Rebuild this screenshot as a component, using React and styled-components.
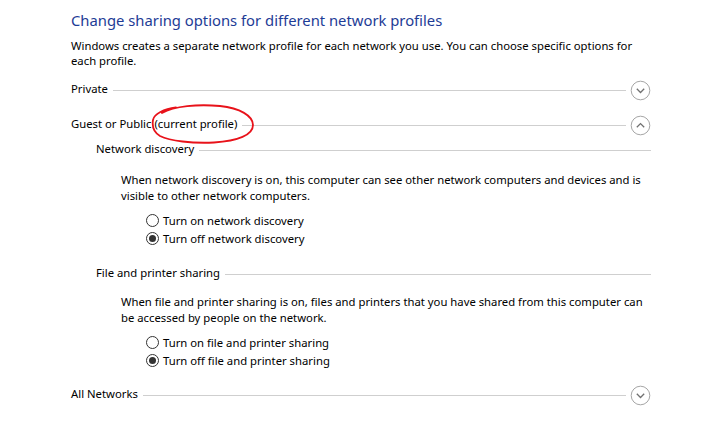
import React from "react";
import styled, { createGlobalStyle } from "styled-components";

const GlobalStyle = createGlobalStyle`
  html, body {
    margin: 0;
    background: #fff;
  }
  body {
    font-family: "Noto Sans", "Segoe UI", sans-serif;
    font-size: 11.3px;
    color: #000;
  }
`;

const Page = styled.div`
  width: 580px;
  padding: 9px 0 30px 71px;
`;

const Title = styled.h1`
  margin: 0;
  font-size: 14.8px;
  font-weight: 400;
  line-height: 22px;
  color: #1e3c96;
`;

const Intro = styled.p`
  margin: 7px 0 0;
  line-height: 15px;
  white-space: nowrap;
`;

const Header = styled.div`
  display: flex;
  align-items: center;
  height: 20px;
  margin-top: ${({ $top }) => $top}px;
  margin-left: ${({ $indent }) => $indent || 0}px;
  width: ${({ $indent }) => 580 - ($indent || 0)}px;
`;

const Label = styled.span`
  position: relative;
  white-space: nowrap;
  line-height: 20px;
`;

const Rule = styled.span`
  flex: 1;
  height: 1px;
  margin: 2px 0 0 5px;
  background: #cfcfcf;
`;

const Toggle = styled.svg`
  flex: none;
  width: 21px;
  height: 21px;
  margin: 3px 0 0 4px;
  overflow: visible;
`;

const Scribble = styled.svg`
  position: absolute;
  left: -4px;
  top: -12px;
  width: 106px;
  height: 40px;
  pointer-events: none;
`;

const Body = styled.div`
  margin-left: 50px;
  margin-top: ${({ $top }) => $top}px;
`;

const Note = styled.p`
  margin: 0;
  line-height: 16px;
  white-space: nowrap;
`;

const Options = styled.div`
  display: flex;
  flex-direction: column;
  margin: 7px 0 0 25px;
`;

const Option = styled.label`
  display: flex;
  align-items: center;
  height: 18px;
  gap: 4px;
  white-space: nowrap;
`;

const Dot = styled.span`
  flex: none;
  box-sizing: border-box;
  width: 13px;
  height: 13px;
  border: 1px solid #333;
  border-radius: 50%;
  display: flex;
  align-items: center;
  justify-content: center;

  &::after {
    content: "";
    width: 7px;
    height: 7px;
    border-radius: 50%;
    background: ${({ $on }) => ($on ? "#333" : "transparent")};
  }
`;

function Chevron({ up }) {
  return (
    <Toggle viewBox="0 0 21 21">
      <circle cx="10.5" cy="10.5" r="9.3" fill="none" stroke="#a6a6a6" strokeWidth="1" />
      <path
        d={up ? "M6.8 12.3 L10.5 8.6 L14.2 12.3" : "M6.8 8.8 L10.5 12.5 L14.2 8.8"}
        fill="none"
        stroke="#707070"
        strokeWidth="1.3"
      />
    </Toggle>
  );
}

function Radio({ on, children }) {
  return (
    <Option>
      <Dot $on={on} />
      {children}
    </Option>
  );
}

export default function App() {
  return (
    <>
      <GlobalStyle />
      <Page>
        <Title>Change sharing options for different network profiles</Title>
        <Intro>
          Windows creates a separate network profile for each network you use. You can choose specific options for
          <br />
          each profile.
        </Intro>

        <Header $top={11}>
          <Label>Private</Label>
          <Rule />
          <Chevron />
        </Header>

        <Header $top={15}>
          <Label>
            Guest or Public{" "}
            <Label>
              (current profile)
              <Scribble viewBox="0 0 106 40">
                <path
                  d="M12 9 C 24 2, 48 0, 70 2 C 90 4, 103 12, 103 21 C 103 31, 88 37, 64 38.5 C 42 39.5, 20 37, 10 32 C 3 28, 2 22, 3 16 C 4 10, 14 5, 26 3.5"
                  fill="none"
                  stroke="#e8121a"
                  strokeWidth="1.8"
                  strokeLinecap="round"
                />
              </Scribble>
            </Label>
          </Label>
          <Rule />
          <Chevron up />
        </Header>

        <Header $top={5} $indent={25}>
          <Label>Network discovery</Label>
          <Rule />
        </Header>
        <Body $top={13}>
          <Note>
            When network discovery is on, this computer can see other network computers and devices and is
            <br />
            visible to other network computers.
          </Note>
          <Options>
            <Radio>Turn on network discovery</Radio>
            <Radio on>Turn off network discovery</Radio>
          </Options>
        </Body>

        <Header $top={16} $indent={25}>
          <Label>File and printer sharing</Label>
          <Rule />
        </Header>
        <Body $top={11}>
          <Note>
            When file and printer sharing is on, files and printers that you have shared from this computer can
            <br />
            be accessed by people on the network.
          </Note>
          <Options>
            <Radio>Turn on file and printer sharing</Radio>
            <Radio on>Turn off file and printer sharing</Radio>
          </Options>
        </Body>

        <Header $top={15}>
          <Label>All Networks</Label>
          <Rule />
          <Chevron />
        </Header>
      </Page>
    </>
  );
}
